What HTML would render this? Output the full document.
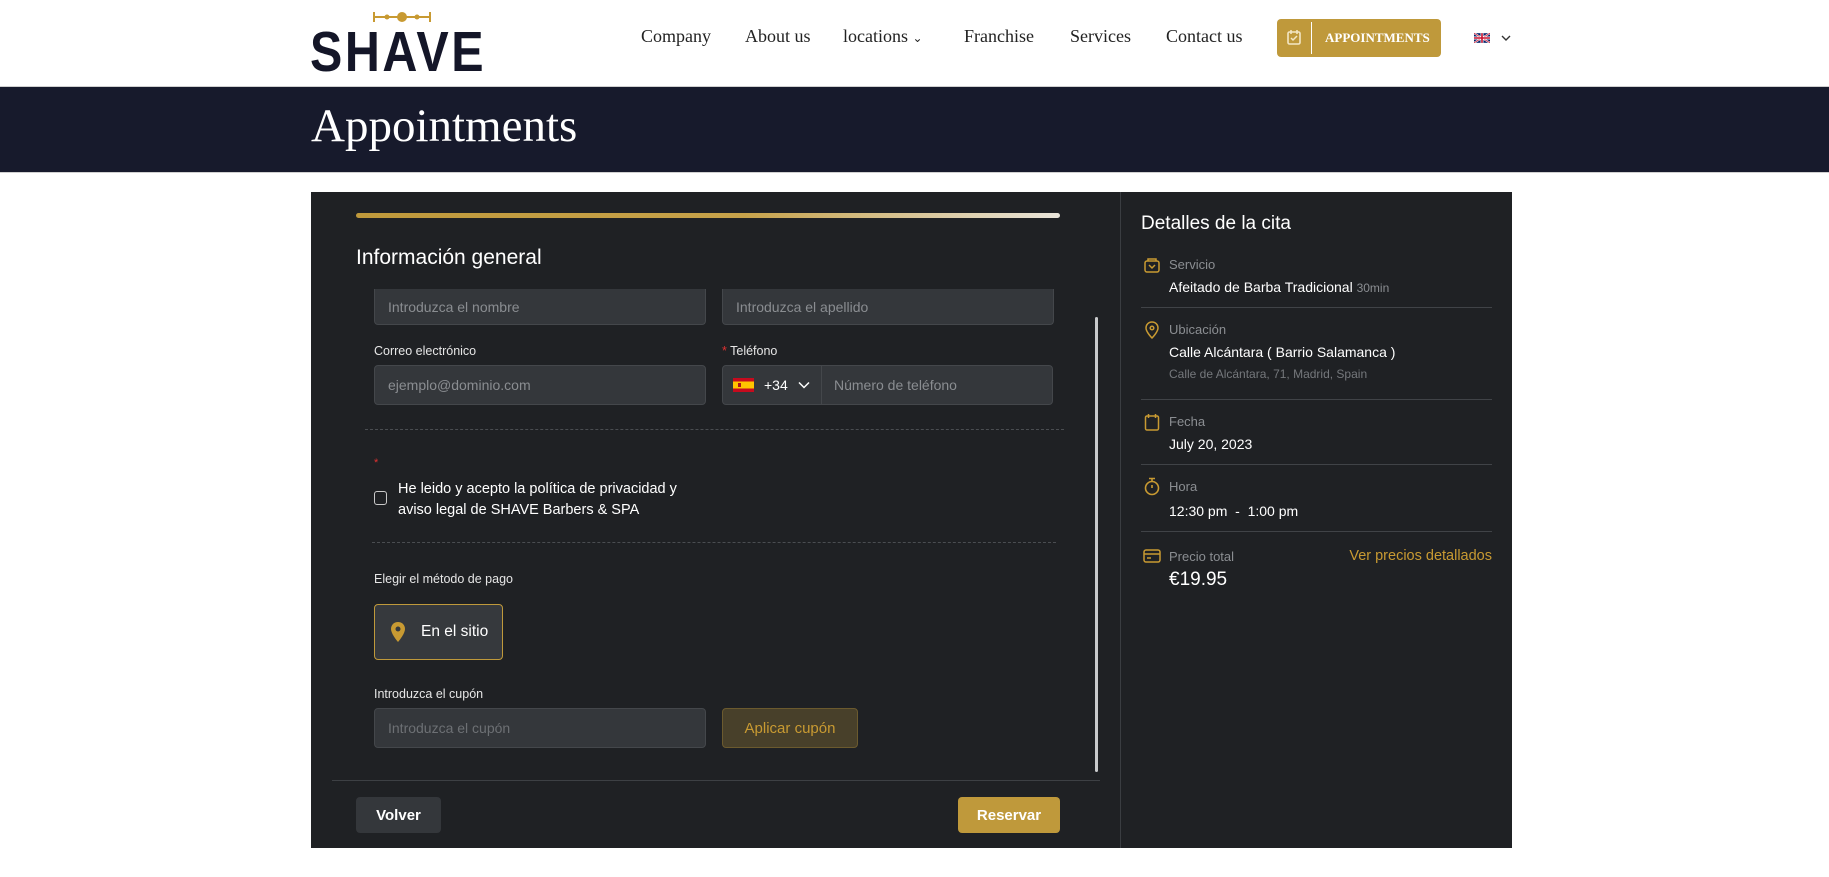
<!DOCTYPE html>
<html><head><meta charset="utf-8"><style>
*{box-sizing:border-box;margin:0;padding:0}
body{width:1829px;height:877px;background:#fff;position:relative;overflow:hidden;font-family:"Liberation Sans",sans-serif}
.a{position:absolute}
.nav{font-family:"Liberation Serif",serif;font-size:18px;color:#222;top:26px}
.inp{position:absolute;background:#34373b;border:1px solid #44474b;border-radius:4px;color:#8a8d91;font-size:14px;padding-left:13px;display:flex;align-items:center}
.lbl{position:absolute;color:#e6e6e6;font-size:12.5px}
.rl{position:absolute;left:1169px;color:#8b8e92;font-size:13px}
.rv{position:absolute;left:1169px;color:#fff;font-size:14px}
.dv{position:absolute;left:1141px;width:351px;height:1px;background:#404347}
.ic{position:absolute;left:1144px}
</style></head><body>
<!-- header -->
<svg class="a" style="left:373px;top:10px" width="58" height="14" viewBox="0 0 58 14"><rect x="0" y="2" width="2" height="10" fill="#c89a32"/><rect x="56" y="2" width="2" height="10" fill="#c89a32"/><rect x="0" y="6" width="58" height="2" fill="#c89a32"/><circle cx="29" cy="7" r="5" fill="#c89a32"/><circle cx="14" cy="7" r="2.5" fill="#c89a32"/><circle cx="44" cy="7" r="2.5" fill="#c89a32"/></svg>
<div class="a" style="left:310px;top:22px;font-size:57px;font-weight:bold;color:#141628;letter-spacing:3px;line-height:60px;font-family:'Liberation Sans',sans-serif;transform:scaleX(0.85);transform-origin:left">SHAVE</div>
<div class="a nav" style="left:641px">Company</div>
<div class="a nav" style="left:745px">About us</div>
<div class="a nav" style="left:843px">locations <span style="font-size:12px">&#8964;</span></div>
<div class="a nav" style="left:964px">Franchise</div>
<div class="a nav" style="left:1070px">Services</div>
<div class="a nav" style="left:1166px">Contact us</div>
<div class="a" style="left:1277px;top:19px;width:164px;height:38px;background:#bf993b;border-radius:4px"></div>
<svg class="a" style="left:1287px;top:29px" width="14" height="16" viewBox="0 0 14 16"><rect x="1" y="3" width="12" height="12" rx="1.5" fill="none" stroke="#f3e7c6" stroke-width="1.6"/><path d="M4 1v4M10 1v4M4 9l2 2 4-4" stroke="#f3e7c6" stroke-width="1.5" fill="none"/></svg>
<div class="a" style="left:1311px;top:22px;width:1px;height:32px;background:#fff"></div>
<div class="a" style="left:1325px;top:30px;color:#fff;font-family:'Liberation Serif',serif;font-weight:bold;font-size:13px">APPOINTMENTS</div>
<svg class="a" style="left:1474px;top:32px" width="16" height="12" viewBox="0 0 60 36"><rect width="60" height="36" fill="#012169"/><path d="M0 0L60 36M60 0L0 36" stroke="#fff" stroke-width="7"/><path d="M0 0L60 36M60 0L0 36" stroke="#c8102e" stroke-width="3"/><path d="M30 0v36M0 18h60" stroke="#fff" stroke-width="11"/><path d="M30 0v36M0 18h60" stroke="#c8102e" stroke-width="6"/></svg>
<svg class="a" style="left:1501px;top:34px" width="10" height="8" viewBox="0 0 10 8"><path d="M1 2l4 4 4-4" stroke="#333" stroke-width="1.4" fill="none"/></svg>
<div class="a" style="left:0;top:86px;width:1829px;height:1px;background:#d0d0d0"></div>
<div class="a" style="left:0;top:87px;width:1829px;height:85px;background:#171a2c"></div>
<div class="a" style="left:0;top:172px;width:1829px;height:1px;background:#d0d0d0"></div>
<div class="a" style="left:311px;top:99px;color:#fff;font-family:'Liberation Serif',serif;font-size:47px">Appointments</div>
<!-- card -->
<div class="a" style="left:311px;top:192px;width:810px;height:656px;background:#1f2124"></div>
<div class="a" style="left:1120px;top:192px;width:392px;height:656px;background:#1f2124;border-left:1px solid #3a3d41"></div>
<div class="a" style="left:356px;top:213px;width:704px;height:5px;border-radius:3px;background:linear-gradient(90deg,#bf993b 0%,#c6a24a 55%,#e8e4da 100%)"></div>
<div class="a" style="left:356px;top:246px;color:#fff;font-size:21px">Información general</div>
<div class="inp" style="left:374px;top:289px;width:332px;height:36px;border-top:none;border-radius:0 0 4px 4px">Introduzca el nombre</div>
<div class="inp" style="left:722px;top:289px;width:332px;height:36px;border-top:none;border-radius:0 0 4px 4px">Introduzca el apellido</div>
<div class="lbl" style="left:374px;top:344px">Correo electrónico</div>
<div class="lbl" style="left:722px;top:344px"><span style="color:#e03131">*</span> Teléfono</div>
<div class="inp" style="left:374px;top:365px;width:332px;height:40px">ejemplo@dominio.com</div>
<div class="inp" style="left:722px;top:365px;width:331px;height:40px;padding:0"><div style="width:99px;height:100%;border-right:1px solid #44474b;display:flex;align-items:center;padding-left:10px;color:#fff;font-size:14px"><svg width="21" height="14" viewBox="0 0 21 14"><rect width="21" height="14" fill="#c60b1e"/><rect y="3.5" width="21" height="7" fill="#ffc400"/><rect x="5" y="5" width="3" height="4" fill="#ad1519"/></svg><span style="margin-left:10px">+34</span><svg style="margin-left:10px" width="12" height="8" viewBox="0 0 12 8"><path d="M1 1.5l5 5 5-5" stroke="#fff" stroke-width="1.5" fill="none"/></svg></div><span style="margin-left:12px">Número de teléfono</span></div>
<div class="a" style="left:365px;top:429px;width:699px;border-top:1px dashed #4a4d51"></div>
<div class="a" style="left:374px;top:457px;color:#e03131;font-size:11px">*</div>
<div class="a" style="left:374px;top:491px;width:13px;height:14px;border:1.5px solid #c9c9c9;border-radius:3px"></div>
<div class="a" style="left:398px;top:479px;color:#fff;font-size:14.5px;line-height:21px">He leido y acepto la política de privacidad y<br>aviso legal de SHAVE Barbers &amp; SPA</div>
<div class="a" style="left:372px;top:542px;width:684px;border-top:1px dashed #4a4d51"></div>
<div class="lbl" style="left:374px;top:572px">Elegir el método de pago</div>
<div class="a" style="left:374px;top:604px;width:129px;height:56px;background:#36393d;border:1px solid #bf993b;border-radius:4px"></div>
<svg class="a" style="left:391px;top:622px" width="14" height="20" viewBox="0 0 14 20"><path d="M7 0C3 0 0 3 0 7c0 5 7 13 7 13s7-8 7-13c0-4-3-7-7-7z" fill="#c89a32"/><circle cx="7" cy="7" r="2.5" fill="#36393d"/></svg>
<div class="a" style="left:421px;top:623px;color:#fff;font-size:15.5px">En el sitio</div>
<div class="lbl" style="left:374px;top:687px">Introduzca el cupón</div>
<div class="inp" style="left:374px;top:708px;width:332px;height:40px;color:#6d7074">Introduzca el cupón</div>
<div class="a" style="left:722px;top:708px;width:136px;height:40px;background:#48402a;border:1px solid #6b5a2e;border-radius:4px;color:#c89a32;font-size:15px;display:flex;align-items:center;justify-content:center">Aplicar cupón</div>
<div class="a" style="left:1095px;top:317px;width:3px;height:455px;background:#c8cacc;border-radius:2px"></div>
<div class="a" style="left:332px;top:780px;width:768px;height:1px;background:#3d4044"></div>
<div class="a" style="left:356px;top:797px;width:85px;height:36px;background:#34373b;border-radius:4px;color:#fff;font-size:15px;font-weight:bold;display:flex;align-items:center;justify-content:center">Volver</div>
<div class="a" style="left:958px;top:797px;width:102px;height:36px;background:#bf993b;border-radius:4px;color:#fff;font-size:15px;font-weight:bold;display:flex;align-items:center;justify-content:center">Reservar</div>
<!-- right -->
<div class="a" style="left:1141px;top:213px;color:#fff;font-size:19px">Detalles de la cita</div>
<svg class="ic" style="top:257px" width="16" height="16" viewBox="0 0 16 16"><rect x="1" y="4" width="14" height="11" rx="2" fill="none" stroke="#c89a32" stroke-width="1.5"/><path d="M4 4V2h8v2M5 8l3 3 3-3" stroke="#c89a32" stroke-width="1.5" fill="none"/></svg>
<div class="rl" style="top:257px">Servicio</div>
<div class="rv" style="top:279px">Afeitado de Barba Tradicional <span style="color:#8b8e92;font-size:12px">30min</span></div>
<div class="dv" style="top:307px"></div>
<svg class="ic" style="top:321px" width="16" height="18" viewBox="0 0 16 18"><path d="M8 1C4.5 1 2 3.6 2 7c0 4 6 10 6 10s6-6 6-10c0-3.4-2.5-6-6-6z" fill="none" stroke="#c89a32" stroke-width="1.5"/><circle cx="8" cy="7" r="1.8" fill="none" stroke="#c89a32" stroke-width="1.5"/></svg>
<div class="rl" style="top:322px">Ubicación</div>
<div class="rv" style="top:344px">Calle Alcántara ( Barrio Salamanca )</div>
<div class="rl" style="top:367px;font-size:12px;color:#75787c">Calle de Alcántara, 71, Madrid, Spain</div>
<div class="dv" style="top:399px"></div>
<svg class="ic" style="top:413px" width="16" height="18" viewBox="0 0 16 18"><rect x="1.5" y="3" width="13" height="14" rx="1.5" fill="none" stroke="#c89a32" stroke-width="1.5"/><path d="M4.5 1v4M11.5 1v4" stroke="#c89a32" stroke-width="1.5"/></svg>
<div class="rl" style="top:414px">Fecha</div>
<div class="rv" style="top:436px">July 20, 2023</div>
<div class="dv" style="top:464px"></div>
<svg class="ic" style="top:477px" width="16" height="19" viewBox="0 0 16 19"><circle cx="8" cy="11" r="6.5" fill="none" stroke="#c89a32" stroke-width="1.6"/><path d="M5 1.5h6M8 2v3M8 8v3" stroke="#c89a32" stroke-width="1.6"/></svg>
<div class="rl" style="top:479px">Hora</div>
<div class="rv" style="top:503px">12:30 pm &nbsp;-&nbsp; 1:00 pm</div>
<div class="dv" style="top:531px"></div>
<svg class="ic" style="left:1143px;top:549px" width="18" height="14" viewBox="0 0 18 14"><rect x="1" y="1" width="16" height="12" rx="2" fill="none" stroke="#c89a32" stroke-width="1.5"/><path d="M1 5h16M4 9h4" stroke="#c89a32" stroke-width="1.5"/></svg>
<div class="rl" style="top:549px">Precio total</div>
<div class="a" style="right:337px;top:548px;color:#c89a32;font-size:14.5px">Ver precios detallados</div>
<div class="rv" style="top:569px;font-size:19px">€19.95</div>
</body></html>
